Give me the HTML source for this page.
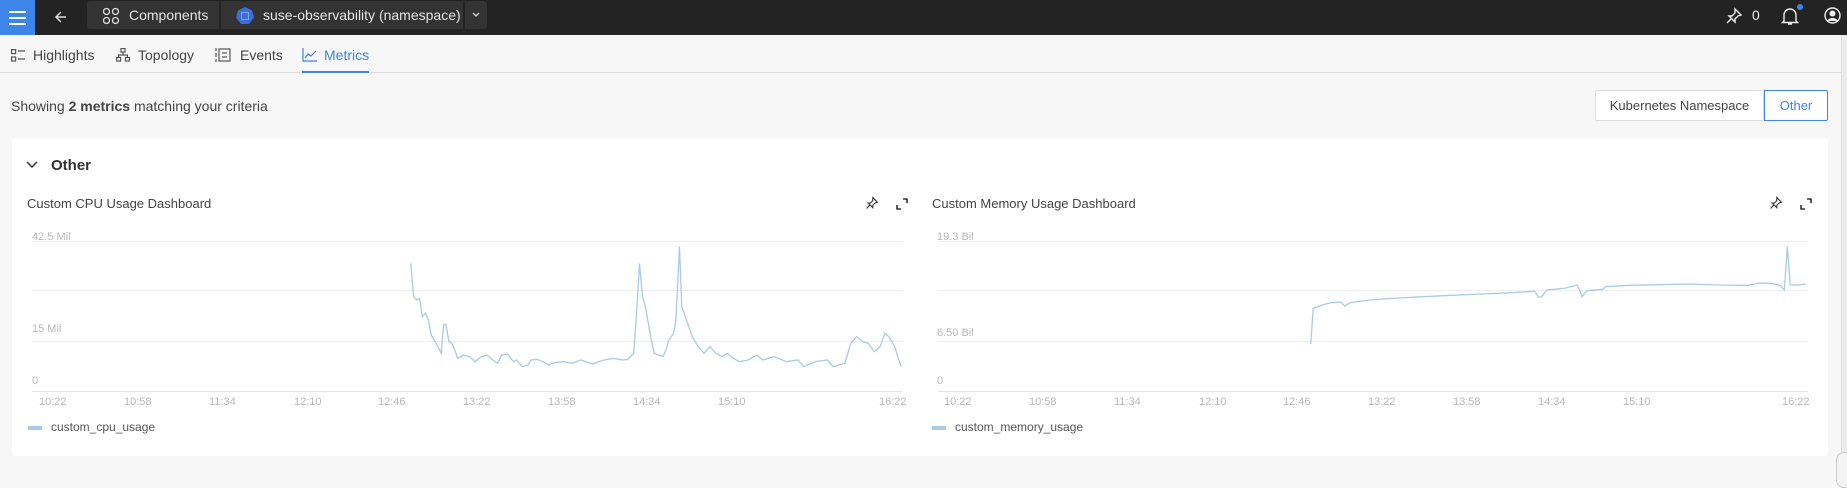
<!DOCTYPE html>
<html><head><meta charset="utf-8"><style>
*{margin:0;padding:0;box-sizing:border-box}
body{width:1847px;height:488px;overflow:hidden;background:#f7f7f7;font-family:"Liberation Sans",sans-serif;position:relative;color:#333}
.abs{position:absolute}
.top{left:0;top:0;width:1847px;height:35px;background:#232323}
.tab{top:47px;font-size:14px;color:#444}
.ax{font-size:11px;color:#b8b8b8;position:absolute}
.grid{position:absolute;height:1px;background:#eee}
</style></head><body>
<div class="abs top"></div>
<div class="abs" style="left:0;top:0;width:35px;height:35px;background:#3d86e8"></div>
<div class="abs" style="left:9px;top:11px;width:17px;height:2px;background:#fff;box-shadow:0 6px 0 #fff,0 12px 0 #fff"></div>
<svg class="abs" style="left:54px;top:10px" width="14" height="14" viewBox="0 0 14 14"><path d="M12 7H2M7 2L2 7l5 5" stroke="#ddd" stroke-width="1.5" fill="none"/></svg>
<div class="abs" style="left:87px;top:1px;width:132px;height:28px;background:#333;border-radius:3px 0 0 3px"></div>
<svg class="abs" style="left:102px;top:7px" width="18" height="18" viewBox="0 0 18 18" fill="none" stroke="#ddd" stroke-width="1.3"><circle cx="4.5" cy="4.5" r="3"/><circle cx="13.5" cy="4.5" r="3"/><circle cx="4.5" cy="13.5" r="3"/><circle cx="13.5" cy="13.5" r="3"/></svg>
<div class="abs" style="left:129px;top:7px;color:#e6e6e6;font-size:14px">Components</div>
<div class="abs" style="left:221px;top:1px;width:242px;height:28px;background:#333"></div>
<svg class="abs" style="left:236px;top:7px" width="18" height="18" viewBox="0 0 18 18"><polygon points="9,0 16,3.5 18,10.5 13,17 5,17 0,10.5 2,3.5" fill="#3b6fd6"/><rect x="5.5" y="5.5" width="7" height="7" fill="none" stroke="#7ea4ee" stroke-width="1"/></svg>
<div class="abs" style="left:263px;top:7px;color:#e6e6e6;font-size:14px">suse-observability (namespace)</div>
<div class="abs" style="left:465px;top:1px;width:22px;height:28px;background:#333;border-radius:0 3px 3px 0"></div>
<svg class="abs" style="left:472px;top:12px" width="8" height="6" viewBox="0 0 8 6"><path d="M1 1l3 3 3-3" stroke="#ddd" stroke-width="1.3" fill="none"/></svg>
<svg class="abs" style="left:1725px;top:7px" width="18" height="18" viewBox="0 0 18 18" fill="none" stroke="#eee" stroke-width="1.4"><path d="M10 2l6 6-3 1-3 3 0 3-6-6 3 0 3-3z M6 12l-4 4"/></svg>
<div class="abs" style="left:1752px;top:7px;color:#eee;font-size:14px">0</div>
<svg class="abs" style="left:1781px;top:6px" width="18" height="20" viewBox="0 0 18 20" fill="none" stroke="#eee" stroke-width="1.4"><path d="M3 15V9a6 6 0 0 1 12 0v6l1.5 1.5h-15z M7 18h4"/></svg>
<div class="abs" style="left:1797px;top:4px;width:6px;height:6px;border-radius:50%;background:#3d86e8"></div>
<svg class="abs" style="left:1824px;top:7px" width="17" height="17" viewBox="0 0 17 17"><circle cx="8.5" cy="8.5" r="7.5" fill="none" stroke="#eee" stroke-width="1.4"/><circle cx="8.5" cy="6.5" r="3" fill="#eee"/><path d="M3 14c2-4 9-4 11 0" fill="#eee"/></svg>

<div class="abs" style="left:0;top:35px;width:1847px;height:38px;background:#f7f7f7;border-bottom:1px solid #ddd"></div>
<svg class="abs" style="left:11px;top:49px" width="15" height="13" viewBox="0 0 15 13" fill="none" stroke="#555" stroke-width="1.2"><rect x="0.6" y="0.6" width="4" height="4"/><rect x="0.6" y="8" width="4" height="4"/><path d="M7 2h7M7 10h7"/></svg>
<div class="abs tab" style="left:33px">Highlights</div>
<svg class="abs" style="left:116px;top:48px" width="14" height="14" viewBox="0 0 14 14" fill="none" stroke="#555" stroke-width="1.2"><rect x="5" y="0.6" width="4" height="3.5"/><rect x="0.6" y="9.5" width="4" height="3.5"/><rect x="9.4" y="9.5" width="4" height="3.5"/><path d="M7 4v3M2.6 9.5V7h8.8v2.5"/></svg>
<div class="abs tab" style="left:138px">Topology</div>
<svg class="abs" style="left:215px;top:48px" width="16" height="14" viewBox="0 0 16 14" fill="none" stroke="#555" stroke-width="1.2"><path d="M1 0v3M1 5v4M1 11v3"/><rect x="4" y="1" width="11" height="12"/><path d="M7 5h5M7 9h5"/></svg>
<div class="abs tab" style="left:240px">Events</div>
<svg class="abs" style="left:302px;top:48px" width="15" height="14" viewBox="0 0 15 14" fill="none" stroke="#3d86e8" stroke-width="1.2"><path d="M1 0v13h14M3 10l3-4 3 2 5-5"/></svg>
<div class="abs tab" style="left:324px;color:#3d86e8">Metrics</div>
<div class="abs" style="left:302px;top:71px;width:67px;height:2px;background:#3d86e8"></div>

<div class="abs" style="left:11px;top:98px;font-size:14px;color:#444">Showing <b>2 metrics</b> matching your criteria</div>
<div class="abs" style="left:1595px;top:90px;width:169px;height:31px;border:1px solid #ddd;background:#fff;border-radius:2px 0 0 2px;font-size:13px;color:#444;text-align:center;line-height:29px">Kubernetes Namespace</div>
<div class="abs" style="left:1764px;top:90px;width:64px;height:31px;border:1px solid #3d86e8;background:#fff;border-radius:0 2px 2px 0;font-size:13px;color:#3d86e8;text-align:center;line-height:29px">Other</div>

<div class="abs" style="left:12px;top:138px;width:1816px;height:318px;background:#fff;border-radius:3px"></div>
<svg class="abs" style="left:26px;top:161px" width="12" height="8" viewBox="0 0 12 8"><path d="M1 1l5 5 5-5" stroke="#333" stroke-width="1.5" fill="none"/></svg>
<div class="abs" style="left:51px;top:157px;font-size:15px;font-weight:bold;color:#333">Other</div>

<div class="abs" style="left:27px;top:196px;font-size:13px;color:#444">Custom CPU Usage Dashboard</div>
<div class="abs" style="left:932px;top:196px;font-size:13px;color:#444">Custom Memory Usage Dashboard</div>
<svg class="abs" style="left:865px;top:196px" width="14" height="14" viewBox="0 0 18 18" fill="none" stroke="#333" stroke-width="1.4"><path d="M10 2l6 6-3 1-3 3 0 3-6-6 3 0 3-3z M6 12l-4 4"/></svg>
<svg class="abs" style="left:896px;top:198px" width="12" height="12" viewBox="0 0 12 12" fill="none" stroke="#333" stroke-width="1.6"><path d="M7 1h4v4M1 7v4h4"/></svg>
<svg class="abs" style="left:1769px;top:196px" width="14" height="14" viewBox="0 0 18 18" fill="none" stroke="#333" stroke-width="1.4"><path d="M10 2l6 6-3 1-3 3 0 3-6-6 3 0 3-3z M6 12l-4 4"/></svg>
<svg class="abs" style="left:1800px;top:198px" width="12" height="12" viewBox="0 0 12 12" fill="none" stroke="#333" stroke-width="1.6"><path d="M7 1h4v4M1 7v4h4"/></svg>

<div class="grid" style="left:32px;top:241px;width:871px"></div>
<div class="grid" style="left:32px;top:290px;width:871px"></div>
<div class="grid" style="left:32px;top:341px;width:871px"></div>
<div class="grid" style="left:32px;top:391px;width:871px;background:#e6e6e6"></div>
<div class="grid" style="left:938px;top:241px;width:870px"></div>
<div class="grid" style="left:938px;top:290px;width:870px"></div>
<div class="grid" style="left:938px;top:341px;width:870px"></div>
<div class="grid" style="left:938px;top:391px;width:870px;background:#e6e6e6"></div>

<div class="ax" style="left:32px;top:231px">42.5 Mil</div>
<div class="ax" style="left:32px;top:323px">15 Mil</div>
<div class="ax" style="left:32px;top:375px">0</div>
<div class="ax" style="left:937px;top:231px">19.3 Bil</div>
<div class="ax" style="left:937px;top:327px">6.50 Bil</div>
<div class="ax" style="left:937px;top:375px">0</div>

<div class="ax" style="left:39px;top:396px">10:22</div>
<div class="ax" style="left:124px;top:396px">10:58</div>
<div class="ax" style="left:209px;top:396px">11:34</div>
<div class="ax" style="left:294px;top:396px">12:10</div>
<div class="ax" style="left:378px;top:396px">12:46</div>
<div class="ax" style="left:463px;top:396px">13:22</div>
<div class="ax" style="left:548px;top:396px">13:58</div>
<div class="ax" style="left:633px;top:396px">14:34</div>
<div class="ax" style="left:718px;top:396px">15:10</div>
<div class="ax" style="left:879px;top:396px">16:22</div>

<div class="ax" style="left:944px;top:396px">10:22</div>
<div class="ax" style="left:1029px;top:396px">10:58</div>
<div class="ax" style="left:1114px;top:396px">11:34</div>
<div class="ax" style="left:1199px;top:396px">12:10</div>
<div class="ax" style="left:1283px;top:396px">12:46</div>
<div class="ax" style="left:1368px;top:396px">13:22</div>
<div class="ax" style="left:1453px;top:396px">13:58</div>
<div class="ax" style="left:1538px;top:396px">14:34</div>
<div class="ax" style="left:1623px;top:396px">15:10</div>
<div class="ax" style="left:1782px;top:396px">16:22</div>

<div class="abs" style="left:28px;top:426px;width:14px;height:4px;background:#a9cbe3"></div>
<div class="abs" style="left:51px;top:420px;font-size:12px;color:#555">custom_cpu_usage</div>
<div class="abs" style="left:932px;top:426px;width:14px;height:4px;background:#a9cbe3"></div>
<div class="abs" style="left:955px;top:420px;font-size:12px;color:#555">custom_memory_usage</div>

<svg class="abs" style="left:0;top:180px" width="920" height="308" viewBox="0 0 1568 924" preserveAspectRatio="none"><path vector-effect="non-scaling-stroke" stroke="#a9cbe3" stroke-width="1.3" fill="none" d="M700,250 L705,350 710,360 715,355 720,410 725,400 730,420 735,465 740,480 745,495 752,520 756,435 760,432 765,485 770,490 775,510 780,535 790,525 800,530 810,545 820,530 830,525 840,540 848,550 855,525 865,522 875,545 880,540 890,560 900,555 905,540 915,538 925,545 935,555 945,548 960,545 975,550 990,540 1010,552 1020,545 1030,540 1045,535 1060,540 1070,538 1080,520 1085,400 1090,250 1095,350 1100,380 1105,430 1110,480 1115,520 1130,530 1135,510 1140,480 1148,460 1152,420 1158,200 1162,380 1170,420 1180,470 1190,500 1200,520 1210,500 1220,520 1230,530 1240,520 1250,535 1260,545 1275,540 1290,525 1300,540 1320,530 1340,545 1360,540 1370,560 1390,545 1410,540 1420,560 1440,550 1450,490 1460,470 1470,485 1480,490 1490,515 1500,500 1508,460 1515,470 1525,500 1530,530 1536,560"/></svg>
<svg class="abs" style="left:920px;top:180px" width="927" height="308" viewBox="0 0 1568 924" preserveAspectRatio="none"><path vector-effect="non-scaling-stroke" stroke="#a9cbe3" stroke-width="1.3" fill="none" d="M661,492 L665,385 680,375 695,368 712,366 718,378 728,368 760,360 800,355 850,350 900,346 950,342 1000,338 1040,334 1046,352 1052,350 1060,330 1090,325 1112,315 1120,350 1128,332 1155,328 1160,320 1200,316 1250,314 1300,312 1350,315 1400,316 1420,309 1440,310 1455,316 1462,330 1467,200 1472,315 1485,315 1498,312"/></svg>

<div class="abs" style="left:1841px;top:35px;width:6px;height:453px;background:#ececec;border-left:1px solid #ddd"></div>
<div class="abs" style="left:1836px;top:452px;width:14px;height:36px;background:#f4f4f4;border:1px solid #ccc;border-radius:8px 0 0 8px"></div>
</body></html>
